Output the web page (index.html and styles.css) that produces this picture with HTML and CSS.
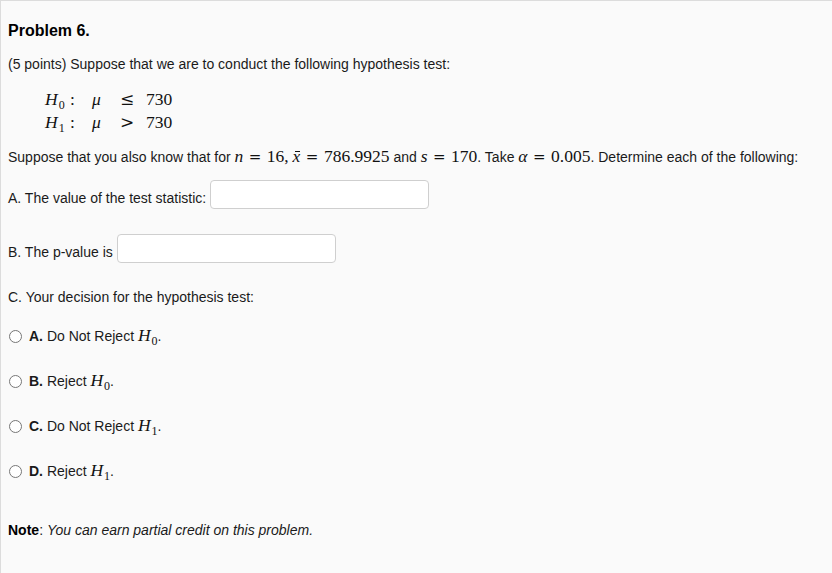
FILE: index.html
```html
<!DOCTYPE html>
<html lang="en">
<head>
<meta charset="utf-8">
<title>Problem 6</title>
<link rel="stylesheet" href="styles.css">
</head>
<body>
<div class="problem">
  <h2 class="title">Problem 6.</h2>
  <p class="text intro">(5 points) Suppose that we are to conduct the following hypothesis test:</p>
  <div class="hyp">
    <span class="mi">H<sub class="sub">0</sub></span><span class="mo">:</span><span class="mi">μ</span><span class="mo big">≤</span><span class="mn">730</span>
    <span class="mi">H<sub class="sub">1</sub></span><span class="mo">:</span><span class="mi">μ</span><span class="mo big">&gt;</span><span class="mn">730</span>
  </div>
  <p class="text given">Suppose that you also know that for <span class="mi">n</span><span class="mo rel">=</span><span class="mn">16</span><span class="mn">,</span> <span class="mi bar">x</span><span class="mo rel">=</span><span class="mn">786.9925</span> and <span class="mi">s</span><span class="mo rel">=</span><span class="mn">170</span>. Take <span class="mi">α</span><span class="mo rel">=</span><span class="mn">0.005</span>. Determine each of the following:</p>
  <div class="row row-a">
    <label class="lbl" for="ans1">A. The value of the test statistic:</label>
    <input class="ans" id="ans1" type="text">
  </div>
  <div class="row row-b">
    <label class="lbl" for="ans2">B. The p-value is</label>
    <input class="ans" id="ans2" type="text">
  </div>
  <p class="text decision">C. Your decision for the hypothesis test:</p>
  <ul class="options">
    <li class="opt"><input class="radio" type="radio" name="dec" id="o1"><label for="o1"><b>A.</b> Do Not Reject <span class="mi">H<sub class="sub">0</sub></span>.</label></li>
    <li class="opt"><input class="radio" type="radio" name="dec" id="o2"><label for="o2"><b>B.</b> Reject <span class="mi">H<sub class="sub">0</sub></span>.</label></li>
    <li class="opt"><input class="radio" type="radio" name="dec" id="o3"><label for="o3"><b>C.</b> Do Not Reject <span class="mi">H<sub class="sub">1</sub></span>.</label></li>
    <li class="opt"><input class="radio" type="radio" name="dec" id="o4"><label for="o4"><b>D.</b> Reject <span class="mi">H<sub class="sub">1</sub></span>.</label></li>
  </ul>
  <p class="text note"><b>Note</b>: <i>You can earn partial credit on this problem.</i></p>
</div>
</body>
</html>
```
FILE: styles.css
```css
html, body {
  margin: 0;
  padding: 0;
  background: #fafafa;
}
body {
  font-family: "Liberation Sans", Arial, sans-serif;
  font-size: 14px;
  color: #1a1a1a;
}
.problem {
  box-sizing: border-box;
  min-height: 100vh;
  border-top: 1px solid #dcdcdc;
  border-left: 1px solid #dcdcdc;
  background: #fafafa;
  padding: 20px 8px 20px 7px;
}
.title {
  margin: 0;
  font-size: 16px;
  line-height: 20px;
  font-weight: bold;
  color: #000;
}
.text {
  margin: 0;
  line-height: 20px;
}
.intro { margin-top: 13px; }
.hyp {
  display: grid;
  grid-template-columns: 25px 22px 28px 26px auto;
  grid-auto-rows: 23px;
  align-items: center;
  margin: 14px 0 0 37px;
  width: 200px;
}
.mi, .mn, .mo {
  font-family: "Liberation Serif", "DejaVu Serif", serif;
  font-size: 17.5px;
  line-height: 1;
  color: #111;
}
.mi { font-style: italic; }
.hyp .mo { text-align: left; }
.hyp .big {
  font-family: "DejaVu Serif", serif;
  font-size: 17px;
}
.sub {
  font-size: 12px;
  font-style: normal;
  vertical-align: -4px;
  line-height: 0;
  margin-left: 1px;
}
.rel {
  font-family: "DejaVu Serif", serif;
  font-size: 15px;
  margin: 0 5.5px;
}
.bar {
  position: relative;
}
.bar::after {
  content: "";
  position: absolute;
  left: 2px;
  right: 0;
  top: 5px;
  border-top: 1px solid #111;
}
.given { margin-top: 13px; }
.row {
  display: flex;
  align-items: center;
  gap: 4px;
}
.row-a { margin-top: 13px; }
.row-b { margin-top: 25px; }
.lbl { padding-top: 6px; }
.ans {
  box-sizing: border-box;
  width: 219px;
  height: 29px;
  border: 1px solid #cfcfcf;
  border-radius: 4px;
  background: #fff;
  margin: 0;
  padding: 2px 6px;
  font: inherit;
}
.decision { margin-top: 24px; }
.options {
  list-style: none;
  margin: 19px 0 0;
  padding: 0;
  display: flex;
  flex-direction: column;
  gap: 25px;
}
.opt {
  display: flex;
  align-items: center;
  line-height: 20px;
  height: 20px;
}
.radio {
  width: 13px;
  height: 13px;
  margin: 0 7px 0 1px;
}
.note { margin-top: 39px; }
.note b { color: #000; }
```
